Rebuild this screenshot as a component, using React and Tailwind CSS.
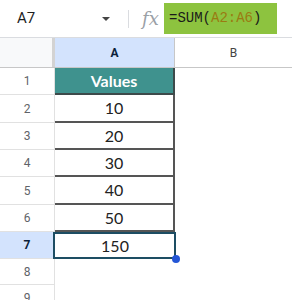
import React from 'react';

const rows = [
    { n: 1, h: 'h-[27px]', value: 'Values', kind: 'head' },
    { n: 2, h: 'h-[28px]', value: '10', kind: 'data' },
    { n: 3, h: 'h-[27px]', value: '20', kind: 'data' },
    { n: 4, h: 'h-[27px]', value: '30', kind: 'data' },
    { n: 5, h: 'h-[28px]', value: '40', kind: 'data' },
    { n: 6, h: 'h-[27px]', value: '50', kind: 'data' },
    { n: 7, h: 'h-[27px]', value: '150', kind: 'selected' },
    { n: 8, h: 'h-[26px]', value: '', kind: 'empty' },
    { n: 9, h: 'h-[26px]', value: '', kind: 'empty' },
];

const cellFont = "font-['Lato','Noto_Sans',sans-serif] text-[16px]";

const App = () => {
    return (
        <div className="w-[292px] h-[300px] bg-white overflow-hidden font-['Roboto','Liberation_Sans',sans-serif]">
            {/* Formula bar */}
            <div className="h-[38px] flex items-center border-b border-[#dadce0]">
                <div className="w-[128px] flex items-center pl-[17px] pr-[18px] justify-between">
                    <span className="text-[15px] text-[#1f1f1f]">A7</span>
                    <span className="w-0 h-0 border-l-[4px] border-r-[4px] border-t-[4px] border-l-transparent border-r-transparent border-t-[#444]" />
                </div>
                <div className="w-px h-[18px] bg-[#dadce0]" />
                <span className="ml-[13px] w-[22px] text-[18px] italic text-[#9aa0a6] font-['DejaVu_Serif','Liberation_Serif',serif] leading-none">fx</span>
                <div className="h-[31px] w-[113px] bg-[#8dc33f] flex items-center pl-[5px] font-['Liberation_Mono','DejaVu_Sans_Mono',monospace] text-[14px] text-[#1a1a1a]">
                    <span>=SUM(</span>
                    <span className="text-[#9a7b12]">A2:A6</span>
                    <span>)</span>
                </div>
            </div>

            {/* Column headers */}
            <div className="flex h-[30px] border-b border-[#c7c7c7]">
                <div className="w-[55px] bg-[#f8f9fa] border-r-[3px] border-[#d3d3d3]" />
                <div className="w-[120px] bg-[#d3e3fd] flex items-center justify-center text-[12px] font-bold text-[#0b1f3a] border-r border-[#c7c7c7]">A</div>
                <div className="flex-1 flex items-center justify-center text-[12px] text-[#444]">B</div>
            </div>

            {/* Rows */}
            {rows.map(r => (
                <div key={r.n} className={`flex ${r.h}`}>
                    <div
                        className={`w-[55px] flex items-center justify-center text-[12px] border-r border-b border-[#e1e1e1] ${
                            r.kind === 'selected' ? 'bg-[#d3e3fd] font-bold text-[#0b1f3a]' : 'text-[#5f6368]'
                        }`}
                    >
                        {r.n}
                    </div>
                    {r.kind === 'head' && (
                        <div className={`w-[120px] bg-[#3f928e] text-white font-bold flex items-center justify-center border-b-2 border-r-2 border-[#3d4a4a] ${cellFont}`}>
                            {r.value}
                        </div>
                    )}
                    {r.kind === 'data' && (
                        <div className={`w-[120px] flex items-center justify-center text-[#222] border-b-2 border-r-2 border-[#555] ${cellFont}`}>
                            {r.value}
                        </div>
                    )}
                    {r.kind === 'selected' && (
                        <div className={`w-[120px] relative flex items-center justify-center text-[#222] ${cellFont}`}>
                            {r.value}
                            <div className="absolute -left-[2px] top-0 -right-px bottom-0 border-2 border-[#1d4d63]" />
                            <div className="absolute -right-[5px] -bottom-[4px] w-[8px] h-[8px] rounded-full bg-[#2456d6]" />
                        </div>
                    )}
                    {r.kind === 'empty' && <div className="w-[120px]" />}
                    <div className="flex-1" />
                </div>
            ))}
        </div>
    );
};

export default App;
